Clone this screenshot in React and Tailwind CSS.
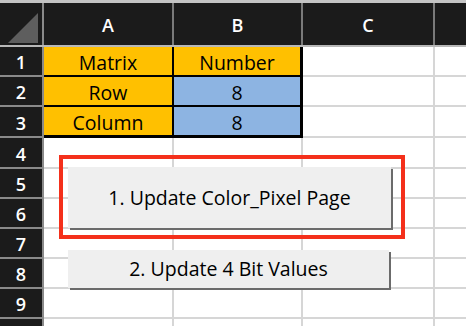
const cols = [
  { key: 'A', w: 'w-[130px]' },
  { key: 'B', w: 'w-[129px]' },
  { key: 'C', w: 'w-[132px]' },
]

const data = {
  1: [
    { text: 'Matrix', cls: 'bg-[#ffc000] border-r-2 border-b-2 border-r-black border-b-black' },
    { text: 'Number', cls: 'bg-[#ffc000] border-r-[3px] border-b-2 border-r-black border-b-black' },
  ],
  2: [
    { text: 'Row', cls: 'bg-[#ffc000] border-r-2 border-b-2 border-r-black border-b-black' },
    { text: '8', cls: 'bg-[#8db4e2] border-r-[3px] border-b-2 border-r-black border-b-black' },
  ],
  3: [
    { text: 'Column', cls: 'bg-[#ffc000] border-r-2 border-b-[3px] border-r-black border-b-black' },
    { text: '8', cls: 'bg-[#8db4e2] border-r-[3px] border-b-[3px] border-r-black border-b-black' },
  ],
}

// rows 3 and 4 are a pixel taller in the capture
const rowHeights = {
  3: 'h-[31px]',
  4: 'h-[31px]',
}

function Cell({ w, cls, children }) {
  return (
    <div className={`${w} h-full shrink-0 flex items-center justify-center pt-[3px] text-[19.5px] text-black ${cls}`}>
      {children}
    </div>
  )
}

function SheetButton({ className, children }) {
  return (
    <div
      className={`absolute bg-[#efefef] flex items-center justify-center text-[19.5px] text-black shadow-[2px_2px_0_#6b6b6b] ${className}`}
    >
      {children}
    </div>
  )
}

export default function App() {
  const rows = [1, 2, 3, 4, 5, 6, 7, 8, 9, 10]

  return (
    <div className="relative w-[466px] h-[326px] overflow-hidden bg-white font-['Open_Sans','Lato',sans-serif]">
      {/* Column headers */}
      <div className="flex h-[47px] border-t-[3px] border-t-[#c4c4c4] border-b-2 border-b-[#b8b8b8] bg-[#1b1b1b]">
        <div className="w-[44px] h-full shrink-0 border-r-2 border-r-[#8a8a8a] relative">
          <svg className="absolute left-[8px] top-[10px]" width="30" height="30" viewBox="0 0 30 30">
            <polygon points="30,0 30,30 0,30" fill="#5e5e5e" />
          </svg>
        </div>
        {cols.map((c) => (
          <div
            key={c.key}
            className={`${c.w} h-full shrink-0 border-r-2 border-r-[#7a7a7a] flex items-center justify-center pt-[2px] text-white text-[18px] font-semibold`}
          >
            {c.key}
          </div>
        ))}
        <div className="flex-1" />
      </div>

      {/* Rows */}
      {rows.map((r) => (
        <div key={r} className={`flex ${rowHeights[r] || 'h-[30px]'}`}>
          <div className="w-[44px] h-full shrink-0 bg-[#1b1b1b] border-r-2 border-r-[#8a8a8a] border-b-2 border-b-[#8a8a8a] flex items-center justify-center pt-[3px] text-white text-[18px] font-semibold">
            {r < 10 ? r : ''}
          </div>
          {data[r] ? (
            <>
              <Cell w="w-[130px]" cls={data[r][0].cls}>{data[r][0].text}</Cell>
              <Cell w="w-[129px]" cls={data[r][1].cls}>{data[r][1].text}</Cell>
            </>
          ) : (
            <>
              <Cell w="w-[130px]" cls="border-r-2 border-b-2 border-[#d6d6d6]" />
              <Cell w="w-[129px]" cls="border-r-2 border-b-2 border-[#d6d6d6]" />
            </>
          )}
          <Cell w="w-[132px]" cls="border-r-2 border-b-2 border-[#d6d6d6]" />
          <div className="flex-1 h-full border-b-2 border-[#d6d6d6]" />
        </div>
      ))}

      {/* Highlight box */}
      <div className="absolute left-[59px] top-[155px] w-[346px] h-[84px] border-4 border-[#f4301b]" />

      <SheetButton className="left-[68px] top-[167px] w-[323px] h-[61px]">
        1. Update Color_Pixel Page
      </SheetButton>
      <SheetButton className="left-[68px] top-[250px] w-[321px] h-[38px]">
        2. Update 4 Bit Values
      </SheetButton>
    </div>
  )
}
